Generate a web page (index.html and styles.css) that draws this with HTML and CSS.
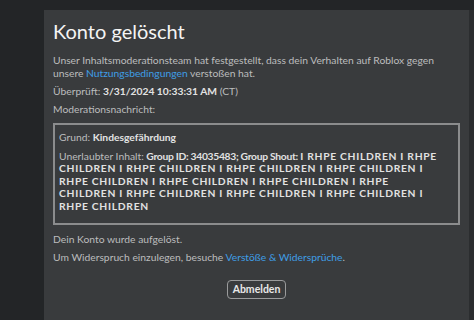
FILE: index.html
```html
<!DOCTYPE html>
<html lang="de">
<head>
    <meta charset="UTF-8">
    <meta name="viewport" content="width=device-width, initial-scale=1.0">
    <title>Konto gelöscht</title>
    <link rel="stylesheet" href="styles.css">
</head>
<body>
    <div class="page">
        <div class="panel">
            <h1 class="title">Konto gelöscht</h1>
            <p class="text">Unser Inhaltsmoderationsteam hat festgestellt, dass dein Verhalten auf Roblox gegen unsere <a href="#">Nutzungsbedingungen</a> verstoßen hat.</p>
            <p class="text">Überprüft: <b>3/31/2024 10:33:31 AM</b> (CT)</p>
            <p class="text">Moderationsnachricht:</p>

            <div class="msg">
                <p class="text">Grund: <b>Kindesgefährdung</b></p>
                <!-- Zeilenumbrüche wie im Original -->
                <p class="text nowrap">Unerlaubter Inhalt: <b><span class="gid">Group ID: 34035483; Group Shout:</span> <span class="shout">I RHPE CHILDREN I RHPE<br>CHILDREN I RHPE CHILDREN I RHPE CHILDREN I RHPE CHILDREN I<br>RHPE CHILDREN I RHPE CHILDREN I RHPE CHILDREN I RHPE<br>CHILDREN I RHPE CHILDREN I RHPE CHILDREN I RHPE CHILDREN I<br>RHPE CHILDREN</span></b></p>
            </div>

            <p class="text">Dein Konto wurde aufgelöst.</p>
            <p class="text">Um Widerspruch einzulegen, besuche <a href="#">Verstöße &amp; Widersprüche</a>.</p>

            <div class="actions">
                <button class="btn">Abmelden</button>
            </div>
        </div>
        <div class="edge"></div>
    </div>
</body>
</html>
```

FILE: styles.css
```css
* {margin: 0; padding: 0; box-sizing: border-box;}
body {background: #232527; font-family: "Lato", "Noto Sans", sans-serif; color: #bcbdbd; height: 320px; overflow: hidden;}
.page {display: flex; padding: 10px 0 0 44px; height: 320px;}
.panel {width: 425px; background: #393b3d; padding: 9px 9px 0 9px; height: 330px;}
.edge {width: 5px; background: #2b2d2f;}
.title {font-size: 20px; font-weight: 400; color: #f4f4f4; line-height: 24px; margin-bottom: 11px;}
.text {font-size: 10.3px; line-height: 13px; margin-bottom: 5px;}
.text b {color: #e2e2e2; font-weight: 700;}
.text a {color: #3f9ee6; text-decoration: none;}
.nowrap {white-space: nowrap;}
.gid {letter-spacing: -0.3px;}
.shout {letter-spacing: 0.7px;}
.msg {border: 2px solid #8b8c8d; padding: 6px 4px 4px 4px; margin: 7px 0 8px;}
.msg .text {line-height: 12.6px; margin-bottom: 6px;}
.actions {display: flex; justify-content: center; padding-top: 11px;}
.btn {font-family: inherit; font-size: 10.5px; font-weight: 700; color: #e8e8e8; background: transparent; border: 1px solid #9a9b9c; border-radius: 4px; height: 19px; padding: 0 5px;}
```
